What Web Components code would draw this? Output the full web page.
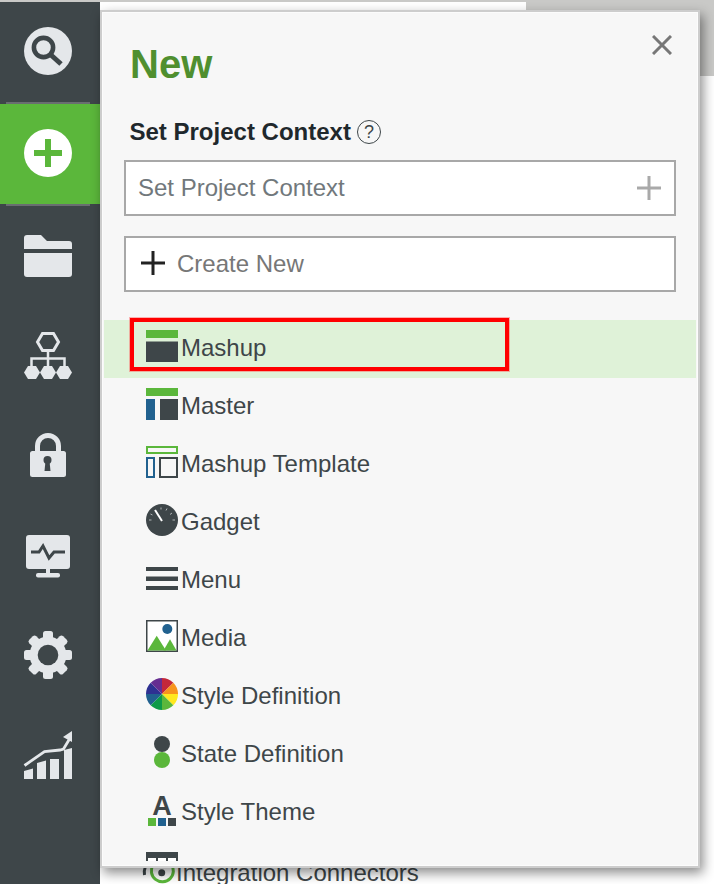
<!DOCTYPE html>
<html>
<head>
<meta charset="utf-8">
<style>
  html, body { margin: 0; height: 100%; overflow: hidden; background: #fff; }
  body { font-family: "Liberation Sans", Arial, sans-serif; }
</style>
</head>
<body>
<app-shell>
  <nav-rail slot="rail">
    <nav-item icon="search"></nav-item>
    <nav-item icon="add" active></nav-item>
    <nav-item icon="folder"></nav-item>
    <nav-item icon="tree"></nav-item>
    <nav-item icon="lock"></nav-item>
    <nav-item icon="monitor"></nav-item>
    <nav-item icon="gear"></nav-item>
    <nav-item icon="chart"></nav-item>
  </nav-rail>
  <back-page slot="main"></back-page>
  <new-dialog slot="dialog">
    <context-field placeholder="Set Project Context"></context-field>
    <create-field label="Create New"></create-field>
    <menu-row icon="mashup" active marked>Mashup</menu-row>
    <menu-row icon="master">Master</menu-row>
    <menu-row icon="template">Mashup Template</menu-row>
    <menu-row icon="gadget">Gadget</menu-row>
    <menu-row icon="menu">Menu</menu-row>
    <menu-row icon="media">Media</menu-row>
    <menu-row icon="wheel">Style Definition</menu-row>
    <menu-row icon="state">State Definition</menu-row>
    <menu-row icon="theme">Style Theme</menu-row>
    <menu-row icon="table">Data Table</menu-row>
  </new-dialog>
</app-shell>

<script>
const DARK = '#3e4649';
const GREEN = '#5bb73b';
const BLUE = '#21618f';
const PALE = '#e4e7ea';

// rail icons use page coordinates, the viewBox shifts them into the item
const railIcons = {
  search: { c: 52, d: `
    <circle cx="48" cy="51" r="24" fill="${PALE}"/>
    <circle cx="43.5" cy="47.5" r="9.6" fill="none" stroke="${DARK}" stroke-width="4.6"/>
    <path d="M51 55l10 9" stroke="${DARK}" stroke-width="5" fill="none"/>` },
  add: { c: 154, d: `
    <circle cx="48" cy="153" r="24" fill="#fff"/>
    <path d="M45 139h6v11h11v6H51v11h-6V156H34v-6h11z" fill="${GREEN}"/>` },
  folder: { c: 256, d: `
    <path d="M24 249v-11q0-3 3-3h14l6 6h22q3 0 3 3v5z" fill="${PALE}"/>
    <path d="M24 253h48v21q0 3-3 3H27q-3 0-3-3z" fill="${PALE}"/>` },
  tree: { c: 356, d: `
    <path d="M42.5 333.5h11l5 8.5-5 8.5h-11l-5-8.5z" fill="none" stroke="${PALE}" stroke-width="3"/>
    <path d="M48 351v15M31.5 368v-9.500h33V368" fill="none" stroke="${PALE}" stroke-width="2.500"/>
    <path d="M28 366h8l4 6.500-4 6.500h-8l-4-6.500z" fill="${PALE}"/>
    <path d="M44 366h8l4 6.500-4 6.500h-8l-4-6.500z" fill="${PALE}"/>
    <path d="M60 366h8l4 6.500-4 6.500h-8l-4-6.500z" fill="${PALE}"/>` },
  lock: { c: 456, d: `
    <path d="M37.500 452v-6a10.500 10.500 0 0 1 21 0v6" fill="none" stroke="${PALE}" stroke-width="5"/>
    <rect x="30" y="451" width="36" height="26" rx="2.500" fill="${PALE}"/>
    <circle cx="47.500" cy="460" r="4" fill="${DARK}"/>
    <path d="M45.500 461h4l1 10h-6z" fill="${DARK}"/>` },
  monitor: { c: 556, d: `
    <rect x="26" y="535" width="44" height="34" rx="3" fill="${PALE}"/>
    <path d="M46 568h4v6h-4z" fill="${PALE}"/>
    <rect x="36" y="573" width="24" height="4.500" rx="2" fill="${PALE}"/>
    <path d="M31 552h8l4-6 6 12 5-6h11" fill="none" stroke="${DARK}" stroke-width="3"/>` },
  gear: { c: 656, d: `
    <circle cx="48" cy="655" r="18.500" fill="${PALE}"/>
    ${[0, 45, 90, 135, 180, 225, 270, 315].map(a =>
      `<rect x="43" y="631" width="10" height="12" rx="2.500" fill="${PALE}" transform="rotate(${a} 48 655)"/>`).join('')}
    <circle cx="48" cy="655" r="10.300" fill="${DARK}"/>` },
  chart: { c: 756, d: `
    <path d="M24 771l9-2.500V779h-9zM37 763l9-2.500V779h-9zM50 759h9v20h-9zM64 750l8-2v31h-8z" fill="${PALE}"/>
    <path d="M24.500 765.500l20-14 15.500-1.500 3.500-1 6-10" fill="none" stroke="${PALE}" stroke-width="2.800"/>
    <path d="M72 731v11l-9-5z" fill="${PALE}"/>` }
};

const wheelColors = ['#c3283a', '#f7941d', '#ffe81f', GREEN, '#0d9a48', BLUE, '#2e3192', '#662d91'];
const wheelPoints = [[16, 0], [27.31, 4.69], [32, 16], [27.31, 27.31], [16, 32], [4.69, 27.31], [0, 16], [4.69, 4.69], [16, 0]];

const menuIcons = {
  mashup: `<rect width="32" height="8" fill="${GREEN}"/><rect y="11.500" width="32" height="20.500" fill="${DARK}"/>`,
  master: `<rect width="32" height="8" fill="${GREEN}"/><rect y="11" width="9" height="21" fill="${BLUE}"/><rect x="14" y="11" width="18" height="21" fill="${DARK}"/>`,
  template: `<rect x="1" y="1" width="30" height="6" fill="none" stroke="${GREEN}" stroke-width="2"/>
    <rect x="1" y="12" width="7" height="19" fill="none" stroke="${BLUE}" stroke-width="2"/>
    <rect x="14" y="12" width="17" height="19" fill="none" stroke="${DARK}" stroke-width="2"/>`,
  gadget: `<circle cx="16" cy="16" r="16" fill="${DARK}"/>
    <path d="M9 6l7 11" stroke="#fff" stroke-width="2" fill="none"/>
    <path d="M3 16h2.500M4.500 10l2 1M15 3.500v2M21 4.500l-1 2M26 9l-2 1.500M29 16h-2.500" stroke="#aeb3b5" stroke-width="1" fill="none"/>`,
  menu: `<rect y="5" width="32" height="4" fill="${DARK}"/><rect y="14.500" width="32" height="4.500" fill="${DARK}"/><rect y="24" width="32" height="4" fill="${DARK}"/>`,
  media: `<rect x=".75" y=".75" width="30.500" height="30.500" fill="#fff" stroke="${DARK}" stroke-width="1.500"/>
    <circle cx="21.300" cy="9" r="5" fill="${BLUE}"/>
    <path d="M1.500 30.500L10.700 15.700 20 30.500z" fill="${GREEN}"/>
    <path d="M17.500 30.500L24 19.300l6.500 11.200z" fill="${GREEN}"/>`,
  wheel: wheelColors.map((c, i) =>
    `<path d="M16 16L${wheelPoints[i]}A16 16 0 0 1 ${wheelPoints[i + 1]}z" fill="${c}"/>`).join(''),
  state: `<circle cx="16" cy="8" r="8" fill="${DARK}"/><circle cx="16" cy="24" r="8" fill="${GREEN}"/>`,
  theme: `<text x="16" y="21" text-anchor="middle" font-family="Liberation Sans, Arial, sans-serif" font-size="27" font-weight="bold" fill="${DARK}">A</text>
    <rect x="2" y="24" width="8" height="8" fill="${GREEN}"/><rect x="12" y="24" width="8" height="8" fill="${BLUE}"/><rect x="22" y="24" width="8" height="8" fill="${DARK}"/>`,
  table: `<rect width="32" height="32" fill="#fff"/><rect width="32" height="6" fill="${DARK}"/>
    <path d="M1 6v26M31 6v26M11 6v26M21 6v26" stroke="${DARK}" stroke-width="2" fill="none"/>`
};

class AppShell extends HTMLElement {
  constructor() {
    super();
    this.attachShadow({ mode: 'open' });
    this.shadowRoot.innerHTML = /* html */ `
    <style>
      :host { display: flex; flex-direction: column; position: relative; width: 714px; height: 884px; overflow: hidden; }
      .strip { height: 2px; background: #c9c9c7; flex: none; }
      .body { display: flex; flex: 1; min-height: 0; }
    </style>
    <div class="strip"></div>
    <div class="body">
      <slot name="rail"></slot>
      <slot name="main"></slot>
    </div>
    <slot name="dialog"></slot>
    `;
  }
}

class NavRail extends HTMLElement {
  constructor() {
    super();
    this.attachShadow({ mode: 'open' });
    this.shadowRoot.innerHTML = /* html */ `
    <style>
      :host { display: flex; flex-direction: column; width: 100px; flex: none; background: ${DARK}; }
    </style>
    <slot></slot>
    `;
  }
}

class NavItem extends HTMLElement {
  constructor() {
    super();
    this.attachShadow({ mode: 'open' });
    const icon = railIcons[this.getAttribute('icon')];
    this.shadowRoot.innerHTML = /* html */ `
    <style>
      :host {
        display: flex; align-items: center; justify-content: center; height: 100px; flex: none;
        position: relative; padding-right: 4px;
      }
      :host([active]) { background: ${GREEN}; margin: 2px 0; }
      :host([active])::before, :host([active])::after {
        content: ""; position: absolute; left: 6px; width: 84px; height: 2px; background: #696e70;
      }
      :host([active])::before { top: -2px; }
      :host([active])::after { bottom: -2px; }
      svg { display: block; overflow: visible; }
    </style>
    <svg width="48" height="48" viewBox="24 ${icon.c - 24} 48 48">${icon.d}</svg>
    `;
  }
}

class BackPage extends HTMLElement {
  constructor() {
    super();
    this.attachShadow({ mode: 'open' });
    this.shadowRoot.innerHTML = /* html */ `
    <style>
      :host { display: flex; flex-direction: column; flex: 1; min-width: 0; background: #fff; overflow: hidden; }
      .head { display: flex; height: 74px; flex: none; }
      .tab { width: 426px; background: #fff; }
      .rest { flex: 1; background: #c9c9c7; }
      .row {
        display: flex; margin-top: 769px; padding-left: 46px; height: 58px; flex: none;
        font-size: 24px; line-height: 56px; color: ${DARK};
      }
      svg { display: block; margin-top: 10px; overflow: visible; flex: none; }
      span { margin-left: -2px; white-space: nowrap; }
    </style>
    <div class="head"><div class="tab"></div><div class="rest"></div></div>
    <div class="row">
      <svg width="32" height="32" viewBox="0 0 32 32">
        <circle cx="15.700" cy="17.700" r="3.500" fill="${DARK}"/>
        <path d="M7 10a11 11 0 1 0 18-1" fill="none" stroke="${GREEN}" stroke-width="3"/>
        <path d="M-1.500 20A17 17 0 0 1 4 5" fill="none" stroke="${DARK}" stroke-width="3"/>
      </svg>
      <span>Integration Connectors</span>
    </div>
    `;
  }
}

class NewDialog extends HTMLElement {
  constructor() {
    super();
    this.attachShadow({ mode: 'open' });
    this.shadowRoot.innerHTML = /* html */ `
    <style>
      :host {
        display: flex; flex-direction: column; position: absolute; left: 100px; top: 10px;
        width: 600px; height: 858px; box-sizing: border-box;
        border: 2px solid #cdcdcd; background: #f7f7f7;
        box-shadow: inset 0 0 0 1px #fcfcfc, 3px 5px 11px rgba(0,0,0,.45);
      }
      h1 { margin: 29px 0 0 28px; font-size: 40px; line-height: 46px; font-weight: bold; color: #4f8f2f; }
      .label {
        display: flex; align-items: center; gap: 6px; margin: 31px 0 14px 27.5px;
        font-size: 24px; line-height: 28px; font-weight: bold; color: #1f282c;
      }
      .help {
        width: 24px; height: 24px; box-sizing: border-box; border: 1.5px solid ${DARK}; border-radius: 50%; flex: none;
        display: flex; align-items: center; justify-content: center;
        font-size: 18px; line-height: 1; font-weight: normal; color: ${DARK};
      }
      .fields { display: flex; flex-direction: column; gap: 20px; margin: 0 22px 22px; }
      .list {
        display: flex; flex-direction: column; margin: 0 2px; padding-top: 6px; box-sizing: border-box;
        height: 547px; overflow: hidden;
      }
      .close { position: absolute; right: 26px; top: 23px; width: 20px; height: 20px; }
      .close svg { display: block; }
    </style>
    <h1>New</h1>
    <div class="label">Set Project Context <span class="help">?</span></div>
    <div class="fields">
      <slot name="fields"></slot>
    </div>
    <div class="list"><slot></slot></div>
    <div class="close">
      <svg width="20" height="20" viewBox="0 0 20 20"><path d="M1 1l18 18M19 1L1 19" stroke="#777" stroke-width="3" fill="none"/></svg>
    </div>
    `;
    this.querySelector('context-field').slot = 'fields';
    this.querySelector('create-field').slot = 'fields';
  }
}

class ContextField extends HTMLElement {
  constructor() {
    super();
    this.attachShadow({ mode: 'open' });
    this.shadowRoot.innerHTML = /* html */ `
    <style>
      :host {
        display: flex; align-items: center; justify-content: space-between; height: 56px; box-sizing: border-box;
        border: 2px solid #a8a8a8; background: #fff; padding: 0 13px 0 12px;
        font-size: 24px; color: #71787c;
      }
      svg { display: block; }
    </style>
    <span>${this.getAttribute('placeholder')}</span>
    <svg width="24" height="24" viewBox="0 0 24 24"><path d="M12 0v24M0 12h24" stroke="#a9a9a9" stroke-width="3" fill="none"/></svg>
    `;
  }
}

class CreateField extends HTMLElement {
  constructor() {
    super();
    this.attachShadow({ mode: 'open' });
    this.shadowRoot.innerHTML = /* html */ `
    <style>
      :host {
        display: flex; align-items: center; gap: 12px; height: 56px; box-sizing: border-box;
        border: 2px solid #a8a8a8; background: #fff; padding: 0 0 0 15px;
        font-size: 24px; color: #777;
      }
      svg { display: block; margin-top: -2px; }
    </style>
    <svg width="24" height="24" viewBox="0 0 24 24"><path d="M12 0v24M0 12h24" stroke="#222" stroke-width="3" fill="none"/></svg>
    <span>${this.getAttribute('label')}</span>
    `;
  }
}

class MenuRow extends HTMLElement {
  constructor() {
    super();
    this.attachShadow({ mode: 'open' });
    this.shadowRoot.innerHTML = /* html */ `
    <style>
      :host {
        display: flex; gap: 3px; position: relative; height: 58px; flex: none; padding-left: 42px;
        font-size: 24px; line-height: 56px; color: ${DARK};
      }
      :host([active]) { background: #dff2d8; }
      :host([marked])::after {
        content: ""; position: absolute; left: 26px; top: -2px; width: 371px; height: 45px;
        border: 4px solid #ff0000; box-shadow: 0 0 0 1px rgba(255,90,90,.45);
      }
      svg { display: block; margin-top: 10px; flex: none; overflow: visible; }
    </style>
    <svg width="32" height="32" viewBox="0 0 32 32">${menuIcons[this.getAttribute('icon')]}</svg>
    <span><slot></slot></span>
    `;
  }
}

customElements.define('app-shell', AppShell);
customElements.define('nav-rail', NavRail);
customElements.define('nav-item', NavItem);
customElements.define('back-page', BackPage);
customElements.define('new-dialog', NewDialog);
customElements.define('context-field', ContextField);
customElements.define('create-field', CreateField);
customElements.define('menu-row', MenuRow);
</script>
</body>
</html>
